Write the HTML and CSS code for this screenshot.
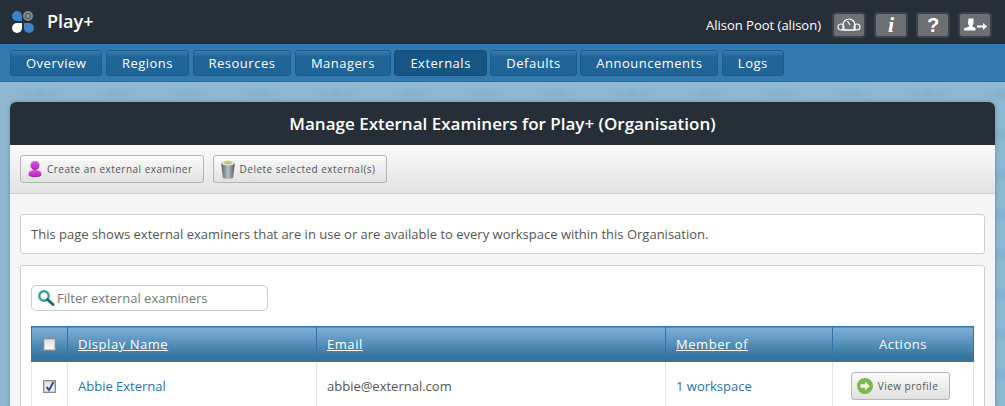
FILE: index.html
```html
<!DOCTYPE html>
<html lang="en">
<head>
<meta charset="utf-8">
<title>Play+</title>
<link rel="stylesheet" href="styles.css">
</head>
<body>
<header class="topbar">
  <div class="brand">
    <svg class="logo" width="24" height="24" viewBox="0 0 24 24">
      <path d="M1 6a5 5 0 0 1 5-5 5.500 5.500 0 0 1 5 5v5H6a5 5 0 0 1-5-5z" fill="#3a85c8"/>
      <circle cx="17" cy="6" r="5" fill="#8a8f93"/>
      <circle cx="17" cy="6" r="2.600" fill="none" stroke="#555b60" stroke-width="1.200"/>
      <path d="M1 18a5 5 0 0 1 5-5h5v5a5 5 0 0 1-5 5 5 5 0 0 1-5-5z" fill="#fff"/>
      <path d="M13 13h5a5 5 0 0 1 0 10 5 5 0 0 1-5-5z" fill="#3a85c8"/>
    </svg>
    <span class="brand-name">Play+</span>
  </div>
  <div class="user">
    <span class="user-name">Alison Poot (alison)</span>
    <a class="tool"><svg width="24" height="16" viewBox="0 0 24 16" fill="none" stroke="#fff" stroke-width="1.200"><path d="M6 13V8a6 6 0 0 1 12 0v5z"/><circle cx="4" cy="10" r="3"/><circle cx="20" cy="10" r="3"/><path d="M10.500 4l2.500 4M6 13h12"/></svg></a>
    <a class="tool tool-i">i</a>
    <a class="tool tool-q">?</a>
    <a class="tool"><svg width="26" height="16" viewBox="0 0 26 16" fill="#fff"><path d="M6.500 1.500h5v4.500c0 1-.5 2-1 2.500v1l3 1.500v2.500H2v-2l5-2v-1c-.5-.5-1-1.500-1-2.500z"/><path d="M15 8.500h6V6l4 3.500-4 3.500v-2.500h-6z"/></svg></a>
  </div>
</header>
<nav class="tabs">
  <a class="tab">Overview</a>
  <a class="tab">Regions</a>
  <a class="tab">Resources</a>
  <a class="tab">Managers</a>
  <a class="tab tab-active">Externals</a>
  <a class="tab">Defaults</a>
  <a class="tab">Announcements</a>
  <a class="tab">Logs</a>
</nav>
<main class="page">
  <section class="panel">
    <h1 class="panel-title">Manage External Examiners for Play+ (Organisation)</h1>
    <div class="toolbar">
      <a class="btn">
        <svg width="16" height="18" viewBox="0 0 16 18"><defs><linearGradient id="p" x1="0" y1="0" x2="0" y2="1"><stop offset="0" stop-color="#d95ce0"/><stop offset="1" stop-color="#a81fb5"/></linearGradient></defs><circle cx="8" cy="5.500" r="4.500" fill="url(#p)"/><path d="M1.500 14.500c0-3.500 3-4.500 6.500-4.500s6.500 1 6.500 4.500c0 2-3 2.500-6.500 2.500s-6.500-.5-6.500-2.500z" fill="url(#p)"/></svg>
        Create an external examiner
      </a>
      <a class="btn">
        <svg width="16" height="20" viewBox="0 0 16 20"><defs><linearGradient id="b" x1="0" y1="0" x2="1" y2="0"><stop offset="0" stop-color="#4f5e66"/><stop offset=".5" stop-color="#b9c3c8"/><stop offset="1" stop-color="#4a5860"/></linearGradient></defs><path d="M1 4l2 15c2 1 8 1 10 0l2-15z" fill="url(#b)"/><ellipse cx="8" cy="4" rx="7" ry="2.500" fill="#dfe3d8"/><ellipse cx="8" cy="3.500" rx="4" ry="1.800" fill="#c9cc5e"/></svg>
        Delete selected external(s)
      </a>
    </div>
    <div class="panel-body">
      <p class="notice">This page shows external examiners that are in use or are available to every workspace within this Organisation.</p>
      <div class="card">
        <label class="filter">
          <svg width="18" height="18" viewBox="0 0 18 18" fill="none"><circle cx="7" cy="7" r="4.700" stroke="#3d9c9c" stroke-width="2.400"/><path d="M10.500 10.500l5.500 5" stroke="#1f6a70" stroke-width="3" stroke-linecap="round"/></svg>
          <span>Filter external examiners</span>
        </label>
        <table class="grid">
          <colgroup>
            <col class="c-check"><col class="c-name"><col class="c-email"><col class="c-member"><col class="c-actions">
          </colgroup>
          <thead>
            <tr>
              <th><span class="check"></span></th>
              <th><a>Display Name</a></th>
              <th><a>Email</a></th>
              <th><a>Member of</a></th>
              <th class="center">Actions</th>
            </tr>
          </thead>
          <tbody>
            <tr>
              <td><span class="check check-on"><svg width="10" height="11" viewBox="0 0 10 11" fill="none"><path d="M1.500 6l2.500 3 4.500-8" stroke="#3b4a9c" stroke-width="2"/></svg></span></td>
              <td class="link">Abbie External</td>
              <td>abbie@external.com</td>
              <td class="link">1 workspace</td>
              <td class="center">
                <a class="btn btn-small">
                  <svg width="16" height="16" viewBox="0 0 16 16"><circle cx="8" cy="8" r="8" fill="#7cb84e"/><path d="M3.500 6.300H8V3.500L12.800 8 8 12.500V9.700H3.500z" fill="#f2f2e8"/></svg>
                  View profile
                </a>
              </td>
            </tr>
          </tbody>
        </table>
      </div>
    </div>
  </section>
</main>
</body>
</html>
```
FILE: styles.css
```css
* { box-sizing: border-box; }
html, body { height: 100%; }
body {
  margin: 0;
  height: 406px;
  overflow: hidden;
  background: #8fb7d2;
  font-family: "Open Sans", "Liberation Sans", sans-serif;
  color: #555;
}
.topbar {
  height: 44px;
  background: #262f38;
  display: flex;
  justify-content: space-between;
  padding: 0 14px 0 11px;
}
.brand { display: flex; align-items: center; gap: 12px; color: #fff; height: 44px; margin-top: -1px; }
.logo { display: block; margin-top: 2px; }
.brand-name { font-size: 18px; font-weight: 600; letter-spacing: 0; }
.user { display: flex; align-items: center; color: #fff; font-size: 13px; padding-top: 5px; }
.user-name { margin-right: 12px; }
.tool {
  width: 32px;
  height: 24px;
  margin-right: 10px;
  background: #6c7075;
  border: 1px solid #3a4249;
  box-shadow: 0 0 0 1px #3a4249;
  border-radius: 3px;
  display: flex;
  align-items: center;
  justify-content: center;
  color: #fff;
  font-weight: 700;
  font-size: 18px;
  line-height: 1;
}
.tool:last-child { margin-right: 0; }
.tool-i { font-family: "Liberation Serif", serif; font-style: italic; font-size: 22px; }
.tool-q { font-family: "Liberation Sans", sans-serif; font-size: 20px; }
.tabs {
  height: 38px;
  background: #337ab0;
  border-bottom: 1px solid #2c6a9c;
  padding: 6px 10px 0;
  display: flex;
  gap: 3.500px;
  align-items: flex-start;
}
.tab {
  height: 26px;
  padding: 0 15px;
  background: linear-gradient(#3a7db0 0, #216497 25%, #216497 100%);
  border: 1px solid #1c5a8a;
  border-radius: 3px;
  color: #fff;
  font-size: 13px;
  line-height: 24px;
  letter-spacing: .5px;
}
.tab-active { background: #175584; border-color: #164c76; }
.page {
  padding: 20px 10px 0;
  background:
    radial-gradient(ellipse 28px 8px at 40px 12px, rgba(70,130,175,.14), transparent),
    linear-gradient(#8fb7d2, #8fb7d2);
  background-size: 74px 40px, auto;
}
.panel {
  border-radius: 6px 6px 0 0;
  overflow: hidden;
  background: #f5f5f5;
  box-shadow: 0 0 4px rgba(0,0,0,.25);
}
.panel-title {
  margin: 0;
  height: 43px;
  background: #262f38;
  color: #fff;
  text-align: center;
  font-size: 17px;
  font-weight: 600;
  line-height: 44px;
}
.toolbar {
  height: 49px;
  padding: 10px;
  display: flex;
  gap: 9px;
  align-items: flex-start;
  background: linear-gradient(#fafafa, #e2e2e2);
  border-bottom: 1px solid #cfcfcf;
}
.btn {
  display: inline-flex;
  align-items: center;
  gap: 4px;
  height: 28px;
  padding: 0 10px 0 6px;
  background: linear-gradient(#fbfbfb, #e0e0e0);
  border: 1px solid #b5b5b5;
  border-radius: 3px;
  color: #555;
  font-size: 10px;
  letter-spacing: .48px;
  white-space: nowrap;
}
.panel-body { padding: 20px 10px 0; height: 212px; }
.notice {
  margin: 0 0 11px;
  height: 40px;
  padding: 0 10px;
  background: #fff;
  border: 1px solid #cfcfcf;
  border-radius: 3px;
  font-size: 13px;
  line-height: 39px;
  color: #555;
}
.card {
  background: #fff;
  border: 1px solid #cfcfcf;
  border-radius: 3px;
  padding: 19px 10px 0;
  height: 200px;
}
.filter {
  display: flex;
  align-items: center;
  gap: 2px;
  width: 237px;
  height: 26px;
  padding-left: 5px;
  border: 1px solid #ccc;
  border-radius: 5px;
  font-size: 13px;
  color: #777;
}
.grid {
  margin-top: 15px;
  width: 942px;
  table-layout: fixed;
  border-collapse: collapse;
  font-size: 13px;
}
.c-check { width: 36px; }
.c-name { width: 249px; }
.c-email { width: 349px; }
.c-member { width: 167px; }
.c-actions { width: 141px; }
th {
  height: 35px;
  padding: 0 10px;
  text-align: left;
  font-weight: 400;
  font-size: 13px;
  letter-spacing: .55px;
  color: #fff;
  background: linear-gradient(#7fb0d8, #33749f 85%);
  border-left: 1px solid #2f75aa;
  border-right: 1px solid #2f75aa;
  border-top: 1px solid #2f75aa;
}
th a { text-decoration: underline; }
td {
  height: 50px;
  padding: 0 10px 2px;
  border-left: 1px solid #e4e4e4;
  border-right: 1px solid #e4e4e4;
  color: #555;
}
.center { text-align: center; }
.link { color: #2f6fb5; }
th:first-child, td:first-child { padding: 0 0 0 11px; }
.check {
  display: flex;
  align-items: center;
  justify-content: center;
  width: 13px;
  height: 13px;
  background: linear-gradient(#ddd, #fff);
  border: 1px solid #8a8a8a;
  box-shadow: inset 0 0 0 1px #c8c8c8;
}
.btn-small { height: 28px; padding: 0 11px 0 5px; gap: 5px; margin-right: 5px; }
```
